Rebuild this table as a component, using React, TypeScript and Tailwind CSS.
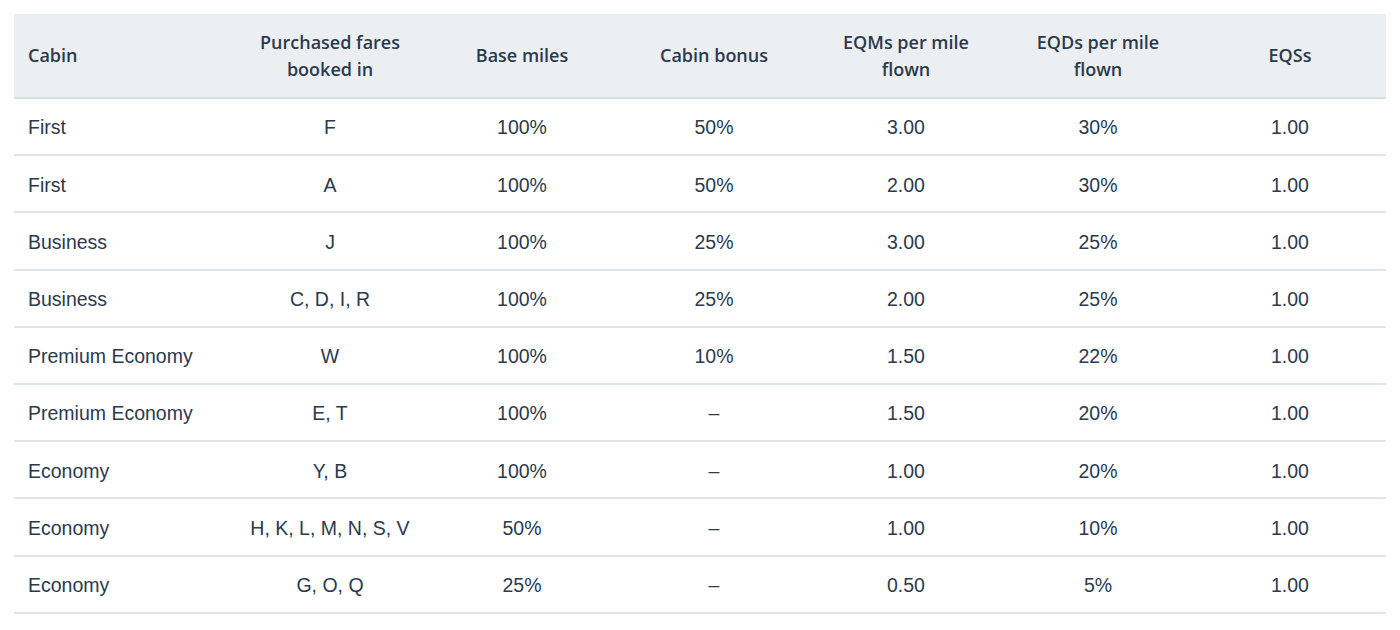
import React from "react";

const rows: string[][] = [
  ["First", "F", "100%", "50%", "3.00", "30%", "1.00"],
  ["First", "A", "100%", "50%", "2.00", "30%", "1.00"],
  ["Business", "J", "100%", "25%", "3.00", "25%", "1.00"],
  ["Business", "C, D, I, R", "100%", "25%", "2.00", "25%", "1.00"],
  ["Premium Economy", "W", "100%", "10%", "1.50", "22%", "1.00"],
  ["Premium Economy", "E, T", "100%", "–", "1.50", "20%", "1.00"],
  ["Economy", "Y, B", "100%", "–", "1.00", "20%", "1.00"],
  ["Economy", "H, K, L, M, N, S, V", "50%", "–", "1.00", "10%", "1.00"],
  ["Economy", "G, O, Q", "25%", "–", "0.50", "5%", "1.00"],
];

const headers: string[][] = [
  ["Cabin"],
  ["Purchased fares", "booked in"],
  ["Base miles"],
  ["Cabin bonus"],
  ["EQMs per mile", "flown"],
  ["EQDs per mile", "flown"],
  ["EQSs"],
];

export default function App() {
  return (
    <div className="w-[1400px] h-[630px] bg-white pt-[14px] pl-[14px]">
      <table className="table-fixed border-collapse w-[1372px] text-[#2b3a4d]">
        <colgroup>
          <col className="w-[220px]" />
          <col className="w-[192px]" />
          <col className="w-[192px]" />
          <col className="w-[192px]" />
          <col className="w-[192px]" />
          <col className="w-[192px]" />
          <col className="w-[192px]" />
        </colgroup>
        <thead>
          <tr className="bg-[#eceff1] h-[84px] border-b-2 border-[#d5dfe8]">
            {headers.map((h, i) => (
              <th
                key={i}
                className={`font-['Open_Sans',sans-serif] font-semibold text-[18px] leading-[27px] whitespace-nowrap ${
                  i === 0 ? "text-left pl-[14px]" : "text-center"
                }`}
              >
                {h.map((line, li) => (
                  <div key={li}>{line}</div>
                ))}
              </th>
            ))}
          </tr>
        </thead>
        <tbody>
          {rows.map((r, ri) => (
            <tr key={ri} className="h-[57.2px] border-b-2 border-[#dde5ec]">
              {r.map((c, ci) => (
                <td
                  key={ci}
                  className={`font-['Liberation_Sans',Arial,sans-serif] text-[19.5px] pt-[3px] ${
                    ci === 0 ? "text-left pl-[14px]" : "text-center"
                  }`}
                >
                  {c}
                </td>
              ))}
            </tr>
          ))}
        </tbody>
      </table>
    </div>
  );
}
